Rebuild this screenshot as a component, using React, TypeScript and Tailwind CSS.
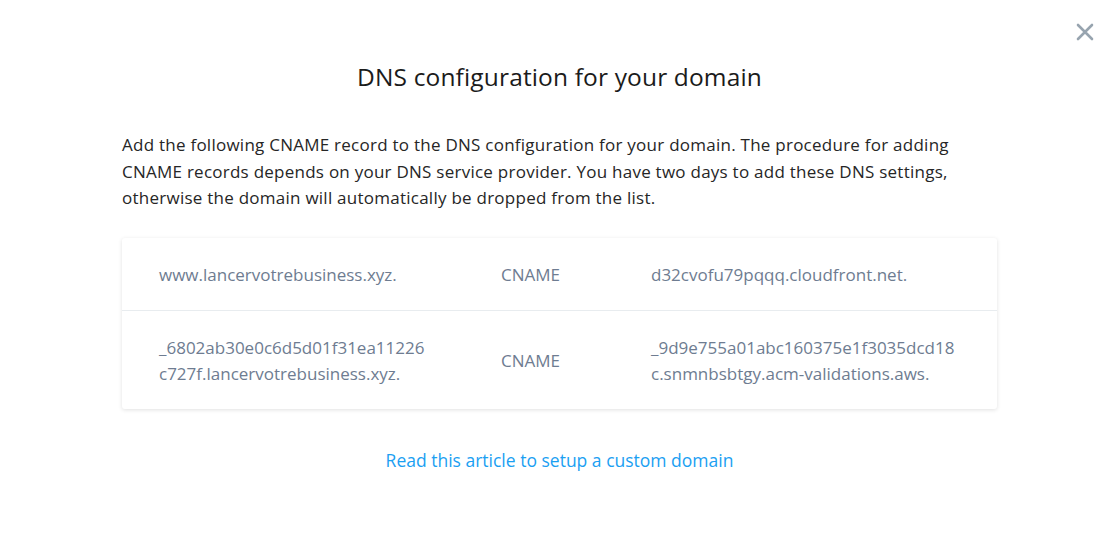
export default function App() {
  const rows = [
    { host: ['www.lancervotrebusiness.xyz.'], type: 'CNAME', value: ['d32cvofu79pqqq.cloudfront.net.'] },
    {
      host: ['_6802ab30e0c6d5d01f31ea11226', 'c727f.lancervotrebusiness.xyz.'],
      type: 'CNAME',
      value: ['_9d9e755a01abc160375e1f3035dcd18', 'c.snmnbsbtgy.acm-validations.aws.'],
    },
  ];

  return (
    <div className="relative w-full min-h-[534px] bg-white" style={{ fontFamily: '"Open Sans", sans-serif' }}>
      <button className="absolute right-[24px] top-[22px] text-[#97a4af]">
        <svg width="20" height="20" viewBox="0 0 20 20" fill="none">
          <path d="M3 3 L17 17 M17 3 L3 17" stroke="currentColor" strokeWidth="2.6" strokeLinecap="round" />
        </svg>
      </button>

      <div className="mx-auto w-[875px] pt-[60px]">
        <h1 className="text-center text-[24.5px] leading-[34px] tracking-[0.15px] text-[#1b1b1b]">
          DNS configuration for your domain
        </h1>

        <p className="mt-[38px] whitespace-nowrap text-[17px] leading-[26.5px] tracking-[0.25px] text-[#262626]">
          Add the following CNAME record to the DNS configuration for your domain. The procedure for adding
          <br />
          CNAME records depends on your DNS service provider. You have two days to add these DNS settings,
          <br />
          otherwise the domain will automatically be dropped from the list.
        </p>

        <div className="mt-[26px] rounded-[3px] bg-white shadow-[0_1px_4px_rgba(0,0,0,0.12)]">
          {rows.map((r, i) => (
            <div
              key={i}
              className={`flex items-center pl-[37px] pt-[3px] text-[17px] leading-[26px] text-[#6e7c91] ${
                i === 0 ? 'h-[73px] border-b border-[#e8ecef]' : 'h-[98px]'
              }`}
            >
              <div className="w-[342px] whitespace-nowrap">
                {r.host.map((l, j) => (
                  <div key={j}>{l}</div>
                ))}
              </div>
              <div className="w-[150px]">{r.type}</div>
              <div className="whitespace-nowrap">
                {r.value.map((l, j) => (
                  <div key={j}>{l}</div>
                ))}
              </div>
            </div>
          ))}
        </div>

        <div className="mt-[38px] text-center">
          <a className="text-[17.5px] text-[#1ba0f2]" href="#">
            Read this article to setup a custom domain
          </a>
        </div>
      </div>
    </div>
  );
}
